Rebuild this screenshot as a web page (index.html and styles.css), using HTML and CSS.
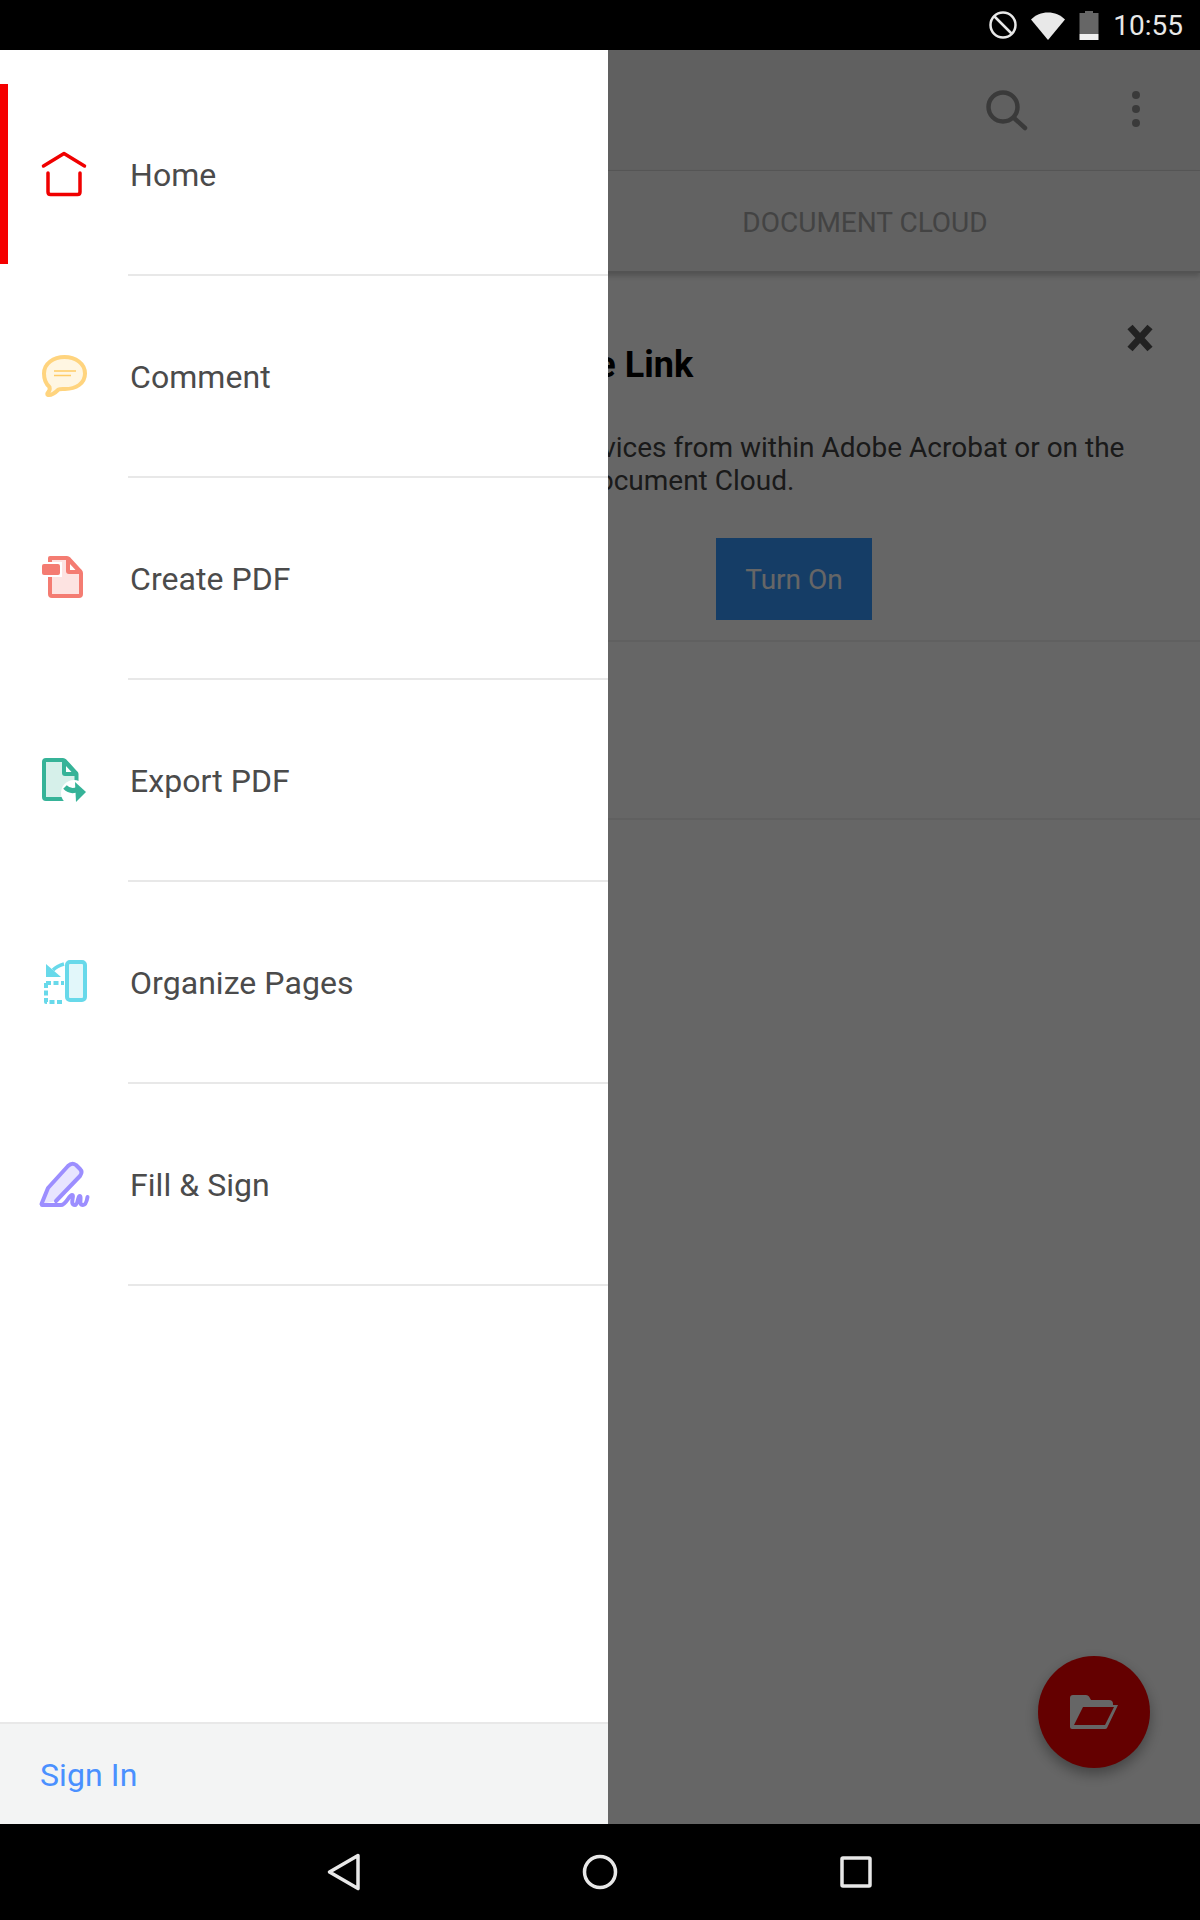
FILE: index.html
```html
<!DOCTYPE html>
<html lang="en">
<head>
    <meta charset="UTF-8">
    <meta name="viewport" content="width=device-width, initial-scale=1.0">
    <title>Adobe Acrobat</title>
    <link rel="stylesheet" href="styles.css">
</head>
<body>
    <div class="statusbar">
        <svg class="status-block" width="28" height="28" viewBox="0 0 28 28"><circle cx="14" cy="14" r="12.5"/><path d="M5.5 5.5l17 17"/></svg>
        <svg class="status-wifi" width="34" height="28" viewBox="0 0 34 28"><path d="M0 7.5C4.500 3 10.500 0.500 17 0.500S29.500 3 34 7.500L17 28z"/></svg>
        <svg class="status-battery" width="20" height="29" viewBox="0 0 20 29"><path class="battery-empty" d="M6 0h8v2h5.500v21H.500V2H6z"/><path class="battery-full" d="M.500 23h19v6h-19z"/></svg>
        <span class="status-time">10:55</span>
    </div>

    <div class="app">
        <div class="toolbar">
            <svg class="toolbar-search" width="44" height="44" viewBox="0 0 44 44"><circle cx="19" cy="19" r="14.500"/><path d="M30 30l11 10"/></svg>
            <div class="toolbar-dots"><span></span><span></span><span></span></div>
        </div>
        <div class="tabs">
            <div class="tab">HOME</div>
            <div class="tab">DOCUMENT CLOUD</div>
        </div>
        <div class="card">
            <svg class="card-close" width="26" height="28" viewBox="0 0 26 28"><path d="M3 3l20 22M23 3L3 25"/></svg>
            <h2>Adobe Cloud Mobile Link</h2>
            <p>Access your files and services from within Adobe Acrobat or on the<br>web, using your Adobe Document Cloud.</p>
            <button class="card-button">Turn On</button>
        </div>
        <div class="empty-row"></div>

        <div class="fab">
            <svg width="48" height="34" viewBox="0 0 48 34"><path fill-rule="evenodd" d="M3 0H16Q18 0 19 1.500L21 5H39Q43 5 43 9V10H48L37 33Q36.500 34 35 34H2Q0 34 0 32V3Q0 0 3 0ZM13 12L4 30H35L44 12Z"/></svg>
        </div>

        <div class="scrim"></div>

        <div class="drawer">
            <div class="menu">
                <div class="menu-item active">
                    <svg class="icon icon-home" viewBox="0 0 48 48"><path d="M3.500 15L24 2.500 44.500 15"/><path d="M8 22v19q0 2.500 2.500 2.500h27q2.500 0 2.500-2.500V22"/></svg>
                    <span>Home</span>
                </div>
                <div class="menu-item">
                    <svg class="icon icon-comment" viewBox="0 0 48 48"><path d="M24.500 4c11 0 20.500 6.500 20.500 16.500S36 36 25 36c-3 0-5-.2-6.500.500C15 40 11 42.500 8 42c-1-.2-1-1.500 0-2.500 1.500-1.500 2-3.500 1.500-5.500C6 31 4 26 4 20.500 4 10.500 13.500 4 24.500 4z"/><path class="icon-lines" d="M14 18h22M14 22.500h17"/></svg>
                    <span>Comment</span>
                </div>
                <div class="menu-item">
                    <svg class="icon icon-create" viewBox="0 0 48 48"><path d="M10 3h17q1 0 2 1l11 12q1 1 1 2v21q0 2-2 2H12q-2 0-2-2z"/><path class="icon-fold" d="M28 4v12q0 1 1 1h11z"/><rect class="icon-halo" x="0" y="7" width="22" height="15"/><rect class="icon-tab" x="2" y="9" width="18" height="11" rx="2"/></svg>
                    <span>Create PDF</span>
                </div>
                <div class="menu-item">
                    <svg class="icon icon-export" viewBox="0 0 48 48"><path d="M6 3h17q1 0 2 1l11 12q.500.500.500 1v24.500q0 .500-.500.500H6q-2 0-2-2V5q0-2 2-2z"/><path class="icon-fold" d="M24 4v12q0 1 1 1h11z"/><circle class="icon-halo" cx="34" cy="36" r="13"/><path class="icon-arrow" d="M25 30q6 6 13 2"/><path class="icon-head" d="M35 25l11 10-10 10z"/></svg>
                    <span>Export PDF</span>
                </div>
                <div class="menu-item">
                    <svg class="icon icon-organize" viewBox="0 0 48 48"><rect x="27" y="3" width="18" height="38" rx="3"/><path class="icon-dashed" d="M6 24h18M6 24v19h18"/><path class="icon-head" d="M6 5l0 13h15z"/><path class="icon-arrow" d="M13 11q4-4 11-6"/></svg>
                    <span>Organize Pages</span>
                </div>
                <div class="menu-item">
                    <svg class="icon icon-sign" viewBox="0 0 48 48"><path d="M1.500 43L8 27 28 5q4-4 8-1l4 4q3 3 0 7L16 40"/><path class="icon-squiggle" d="M2 44H21C26 44 29 34 32 34 35 34 29 44 35 44 38 44 38 34 40 35 42 36 38 44 43 44 46 44 47 39 47.500 36"/></svg>
                    <span>Fill &amp; Sign</span>
                </div>
            </div>
            <div class="signin">Sign In</div>
        </div>
    </div>

    <div class="navbar">
        <svg width="34" height="38" viewBox="0 0 34 38"><path d="M31 2.500L2.500 19 31 35.500z"/></svg>
        <svg width="36" height="36" viewBox="0 0 36 36"><circle cx="18" cy="18" r="15.500"/></svg>
        <svg width="32" height="32" viewBox="0 0 32 32"><rect x="2" y="2" width="28" height="28" rx="1"/></svg>
    </div>
</body>
</html>
```

FILE: styles.css
```css
* {
    box-sizing: border-box;
}

body {
    font-family: Roboto, "Liberation Sans", sans-serif;
    background-color: black;
    margin: 0;
    padding: 0;
    height: 1920px;
    display: flex;
    flex-direction: column;
    overflow: hidden;
}

/* barra de estado */
.statusbar {
    height: 50px;
    background-color: black;
    color: #e8e8e8;
    display: flex;
    align-items: center;
    justify-content: flex-end;
    padding-right: 17px;
}

.status-block {
    margin-right: 14px;
    fill: none;
    stroke: #e8e8e8;
    stroke-width: 2.500;
}

.status-wifi {
    margin-right: 14px;
    margin-top: 1px;
    fill: #e8e8e8;
}

.status-battery {
    margin-right: 14px;
}

.battery-empty {
    fill: #666666;
}

.battery-full {
    fill: #f0f0f0;
}

.status-time {
    font-size: 28px;
}

/* pantalla de fondo */
.app {
    position: relative;
    flex: 1;
    background-color: white;
    display: flex;
    flex-direction: column;
    overflow: hidden;
}

.toolbar {
    height: 121px;
    background-color: #f0f0f0;
    border-bottom: 1px solid #d8d8d8;
    display: flex;
    align-items: center;
    justify-content: flex-end;
    padding-right: 60px;
}

.toolbar-search {
    fill: none;
    stroke: #929292;
    stroke-width: 4.500;
    stroke-linecap: round;
    margin-right: 104px;
}

.toolbar-dots {
    display: flex;
    flex-direction: column;
    gap: 6px;
    margin-top: -2px;
}

.toolbar-dots span {
    width: 8px;
    height: 8px;
    border-radius: 50%;
    background-color: #929292;
}

.tabs {
    height: 102px;
    display: grid;
    grid-template-columns: 530px 1fr;
    background-color: #f5f5f5;
    border-bottom: 2px solid #d0d0d0;
    box-shadow: 0 3px 5px rgba(0, 0, 0, 0.2);
    position: relative;
}

.tab {
    display: flex;
    align-items: center;
    justify-content: center;
    font-size: 28px;
    color: #a8a8a8;
    padding-top: 2px;
}

.card {
    position: relative;
    height: 369px;
    border-bottom: 2px solid #f0f0f0;
    padding: 72px 0 0 292px;
}

.card h2 {
    margin: 0 0 0 -3px;
    font-size: 36px;
    font-weight: bold;
    color: black;
    line-height: 40px;
    white-space: nowrap;
}

.card p {
    margin: 46px 0 0;
    font-size: 28px;
    line-height: 33px;
    color: #424242;
    white-space: nowrap;
}

.card-close {
    position: absolute;
    top: 51px;
    right: 47px;
    fill: none;
    stroke: #555555;
    stroke-width: 7;
}

.card-button {
    display: block;
    margin: 41px 0 0 424px;
    width: 156px;
    height: 82px;
    background-color: #3598ff;
    color: white;
    border: none;
    font-family: inherit;
    font-size: 28px;
}

.empty-row {
    height: 178px;
    border-bottom: 2px solid #f0f0f0;
}

.fab {
    position: absolute;
    left: 1038px;
    top: 1606px;
    width: 112px;
    height: 112px;
    border-radius: 50%;
    background-color: #fa0000;
    box-shadow: 0 6px 14px rgba(0, 0, 0, 0.35);
    display: flex;
    align-items: center;
    justify-content: center;
}

.fab svg {
    fill: white;
}

.scrim {
    position: absolute;
    inset: 0;
    background-color: rgba(0, 0, 0, 0.6);
}

/* menu lateral */
.drawer {
    position: absolute;
    left: 0;
    top: 0;
    bottom: 0;
    width: 608px;
    background-color: white;
    display: flex;
    flex-direction: column;
}

.menu {
    flex: 1;
    padding-top: 24px;
}

.menu-item {
    position: relative;
    height: 202px;
    display: flex;
    align-items: center;
    padding-left: 40px;
    font-size: 32px;
    letter-spacing: 0.05px;
    color: #4b4b4b;
}

/* la linea empieza despues del icono */
.menu-item::after {
    content: "";
    position: absolute;
    left: 128px;
    right: 0;
    bottom: 0;
    height: 2px;
    background-color: #e8e8e8;
}

.menu-item.active::before {
    content: "";
    position: absolute;
    left: 0;
    top: 10px;
    width: 8px;
    height: 180px;
    background-color: #f50000;
}

.menu-item span {
    margin-left: 42px;
}

.icon {
    width: 48px;
    height: 48px;
    flex: none;
    overflow: visible;
}

.icon-home {
    fill: none;
    stroke: #f00000;
    stroke-width: 3.500;
    stroke-linecap: round;
    stroke-linejoin: round;
}

.icon-comment {
    fill: #fff6e2;
    stroke: #ffd47e;
    stroke-width: 4;
    stroke-linejoin: round;
}

.icon-comment .icon-lines {
    fill: none;
    stroke: #ffcc66;
    stroke-width: 1.500;
}

.icon-create {
    fill: #fde3e1;
    stroke: #f47c72;
    stroke-width: 4;
    stroke-linejoin: round;
}

.icon-create .icon-fold {
    fill: white;
}

.icon-create .icon-halo {
    fill: white;
    stroke: none;
}

.icon-create .icon-tab {
    fill: #f47c72;
    stroke: none;
}

.icon-export {
    fill: #d6f0ea;
    stroke: #36b398;
    stroke-width: 4;
    stroke-linejoin: round;
}

.icon-export .icon-fold {
    fill: white;
}

.icon-export .icon-halo {
    fill: white;
    stroke: none;
}

.icon-export .icon-arrow {
    fill: none;
    stroke-width: 5;
}

.icon-export .icon-head {
    fill: #36b398;
    stroke: none;
}

.icon-organize {
    fill: #e2f7fa;
    stroke: #68d9ea;
    stroke-width: 4;
    stroke-linejoin: round;
}

.icon-organize .icon-dashed {
    fill: none;
    stroke-dasharray: 5 2.500;
}

.icon-organize .icon-head {
    fill: #68d9ea;
    stroke: none;
}

.icon-organize .icon-arrow {
    fill: none;
    stroke-width: 3.500;
}

.icon-sign {
    fill: #e8e5ff;
    stroke: #9c8eff;
    stroke-width: 4;
    stroke-linejoin: round;
    stroke-linecap: round;
}

.icon-sign .icon-squiggle {
    fill: none;
}

.signin {
    height: 102px;
    background-color: #f3f4f4;
    border-top: 2px solid #e8e8e8;
    display: flex;
    align-items: center;
    padding-left: 40px;
    padding-top: 2px;
    font-size: 32px;
    letter-spacing: 0.1px;
    color: #4a90ff;
}

/* barra de navegacion */
.navbar {
    height: 96px;
    background-color: black;
    display: grid;
    grid-template-columns: 255px 258px 1fr;
    align-items: center;
    padding-left: 327px;
}

.navbar svg {
    fill: none;
    stroke: #e8e8e8;
    stroke-width: 3.500;
    stroke-linejoin: round;
}
```
